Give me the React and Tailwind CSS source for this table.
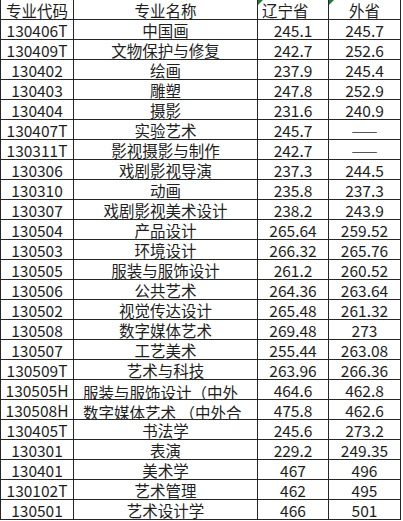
import React from "react";

const rows = [
  ["130406T", "中国画", "245.1", "245.7"],
  ["130409T", "文物保护与修复", "242.7", "252.6"],
  ["130402", "绘画", "237.9", "245.4"],
  ["130403", "雕塑", "247.8", "252.9"],
  ["130404", "摄影", "231.6", "240.9"],
  ["130407T", "实验艺术", "245.7", "——"],
  ["130311T", "影视摄影与制作", "242.7", "——"],
  ["130306", "戏剧影视导演", "237.3", "244.5"],
  ["130310", "动画", "235.8", "237.3"],
  ["130307", "戏剧影视美术设计", "238.2", "243.9"],
  ["130504", "产品设计", "265.64", "259.52"],
  ["130503", "环境设计", "266.32", "265.76"],
  ["130505", "服装与服饰设计", "261.2", "260.52"],
  ["130506", "公共艺术", "264.36", "263.64"],
  ["130502", "视觉传达设计", "265.48", "261.32"],
  ["130508", "数字媒体艺术", "269.48", "273"],
  ["130507", "工艺美术", "255.44", "263.08"],
  ["130509T", "艺术与科技", "263.96", "266.36"],
  ["130505H", "服装与服饰设计（中外", "464.6", "462.8", true],
  ["130508H", "数字媒体艺术 （中外合", "475.8", "462.6", true],
  ["130405T", "书法学", "245.6", "273.2"],
  ["130301", "表演", "229.2", "249.35"],
  ["130401", "美术学", "467", "496"],
  ["130102T", "艺术管理", "462", "495"],
  ["130501", "艺术设计学", "466", "501"],
];

const cell = "h-full flex items-center justify-center border-r border-[#262626] overflow-hidden whitespace-nowrap";

function Tri() {
  return (
    <span className="absolute left-0 top-0 w-0 h-0 border-t-[5px] border-t-[#217a3c] border-r-[5px] border-r-transparent" />
  );
}

export default function App() {
  return (
    <div
      className="w-[403px] h-[521px] bg-white text-[#1e1e1e] text-[15.5px] leading-[16px]"
      style={{ fontFamily: '"Noto Sans CJK SC", "Noto Sans", sans-serif' }}
    >
      <div className="w-[401px] border-l border-[#262626]">
        <div className="flex h-[20px] border-b border-[#262626]">
          <div className={`${cell} w-[73px]`}>专业代码</div>
          <div className={`${cell} w-[184px]`}>专业名称</div>
          <div className={`${cell} w-[71px] relative !justify-start pl-[4px]`}>
            <Tri />
            辽宁省
          </div>
          <div className={`${cell} w-[72px] relative`}>
            <Tri />
            外省
          </div>
        </div>
        {rows.map((r) => (
          <div key={r[0]} className="flex h-[20px] border-b border-[#262626]">
            <div className={`${cell} w-[73px]`}>{r[0]}</div>
            {r[4] ? (
              <div className="h-full w-[184px] border-r border-[#262626] overflow-hidden whitespace-nowrap pl-[9px] pt-[4px]">
                {r[1]}
              </div>
            ) : (
              <div className={`${cell} w-[184px]`}>{r[1]}</div>
            )}
            <div className={`${cell} w-[71px]`}>{r[2]}</div>
            <div className={`${cell} w-[72px]`}>
              {r[3] === "——" ? (
                <span className="text-[#555]">——</span>
              ) : (
                r[3]
              )}
            </div>
          </div>
        ))}
      </div>
    </div>
  );
}
